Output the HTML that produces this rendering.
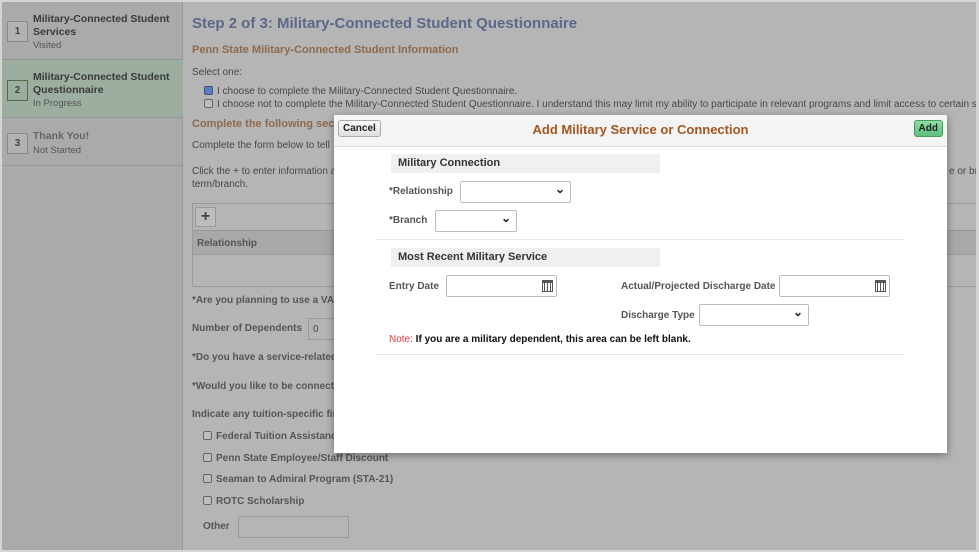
<!DOCTYPE html>
<html><head><style>
*{box-sizing:border-box;margin:0;padding:0}
body{width:979px;height:552px;overflow:hidden;font-family:"Liberation Sans",sans-serif;background:#b5b5b5;position:relative;font-size:10px;color:#474747}
.frame{position:absolute;left:0;top:0;width:979px;height:552px;border:2px solid #d4d4d4;border-right-width:3px}
.side{position:absolute;left:2px;top:2px;width:181px;height:548px;background:#aaaaaa;border-right:1px solid #999}
.item{position:absolute;left:0;width:181px;border-bottom:1px solid #959595}
.num{position:absolute;left:5px;width:21px;height:21px;border:1px solid #888;font-weight:bold;font-size:10px;text-align:center;line-height:19px;color:#444;background:#b2b2b2}
.t{position:absolute;left:31px;font-weight:bold;font-size:10.5px;line-height:13px;color:#3a3a3a}
.s{position:absolute;left:31px;font-size:9.5px;color:#555}
.main{position:absolute;left:192px;top:0}
.a{position:absolute;white-space:nowrap}
.h1{font-size:15px;font-weight:bold;color:#5d678a}
.h2{font-size:11px;font-weight:bold;color:#8d6a4d}
.b{font-weight:bold;color:#555}
.cb{display:inline-block;width:9px;height:9px;border:1px solid #666;border-radius:2px;vertical-align:-1px;margin-right:4px;background:#bdbdbd}
.modal{position:absolute;left:334px;top:115px;width:613px;height:338px;background:#fff;box-shadow:0 2px 8px rgba(0,0,0,.4)}
.mh{height:32px;background:#f4f4f4;border-bottom:1px solid #ddd;position:relative}
.btn{position:absolute;top:4px;height:18px;border:1px solid #aaa;border-radius:3px;font-weight:bold;font-size:10px;line-height:16px;padding:0 4px;background:linear-gradient(#fafafa,#ddd);color:#222}
.sec{position:absolute;left:57px;width:269px;height:19px;background:#f0f0f0;font-weight:bold;font-size:11px;color:#333;padding:3px 7px}
.lb{position:absolute;font-weight:bold;font-size:10px;color:#555}
.inp{position:absolute;height:22px;border:1px solid #bbb;border-radius:2px;background:#fff}
.sel::after{content:"⌄";position:absolute;right:5px;top:0;font-size:12px;font-weight:bold;color:#222}
.hr{position:absolute;left:42px;width:528px;border-top:1px solid #e6e6e6}
.cal{position:absolute;right:3px;top:4px;width:11px;height:12px;border:1px solid #555;border-top-width:3px;background:repeating-linear-gradient(90deg,#fff 0 1px,#555 1px 2px,#fff 2px 3px)}
</style></head><body>
<div class="side">
 <div class="item" style="top:0;height:58px"><div class="num" style="top:19px">1</div><div class="t" style="top:11px">Military-Connected Student<br>Services</div><div class="s" style="top:38px">Visited</div></div>
 <div class="item" style="top:58px;height:58px;background:#9bae9f"><div class="num" style="top:20px;border-color:#566b4a;background:#9bae9f">2</div><div class="t" style="top:11px">Military-Connected Student<br>Questionnaire</div><div class="s" style="top:38px">In Progress</div></div>
 <div class="item" style="top:116px;height:48px"><div class="num" style="top:15px">3</div><div class="t" style="top:12px;color:#666">Thank You!</div><div class="s" style="top:27px">Not Started</div></div>
</div>
<div class="main">
 <div class="a h1" style="left:0;top:15px">Step 2 of 3: Military-Connected Student Questionnaire</div>
 <div class="a h2" style="left:0;top:44px">Penn State Military-Connected Student Information</div>
 <div class="a" style="left:0;top:67px">Select one:</div>
 <div class="a" style="left:12px;top:86px"><span class="cb" style="background:#5a7bc6;border-color:#456"></span>I choose to complete the Military-Connected Student Questionnaire.</div>
 <div class="a" style="left:12px;top:99px"><span class="cb"></span>I choose not to complete the Military-Connected Student Questionnaire. I understand this may limit my ability to participate in relevant programs and limit access to certain scho</div>
 <div class="a h2" style="left:0;top:118px">Complete the following sect</div>
 <div class="a" style="left:0;top:140px">Complete the form below to tell</div>
 <div class="a" style="left:0;top:166px">Click the + to enter information a</div>
 <div class="a" style="left:0;top:179px">term/branch.</div>
 <div class="a" style="left:757px;top:166px">e or bra</div>
 <div class="a" style="left:0;top:203px;width:800px;height:84px;border:1px solid #999"></div>
 <div class="a" style="left:3px;top:207px;width:21px;height:20px;border:1px solid #999;background:#bdbdbd;font-weight:bold;font-size:16px;text-align:center;line-height:18px;color:#444">+</div>
 <div class="a b" style="left:1px;top:230px;width:798px;height:25px;background:#a8a8a8;border-top:1px solid #999;border-bottom:1px solid #999;padding:7px 4px">Relationship</div>
 <div class="a b" style="left:0;top:295px">*Are you planning to use a VA</div>
 <div class="a b" style="left:0;top:323px">Number of Dependents</div>
 <div class="a" style="left:116px;top:318px;width:30px;height:22px;border:1px solid #999;padding:5px 4px">0</div>
 <div class="a b" style="left:0;top:352px">*Do you have a service-related</div>
 <div class="a b" style="left:0;top:381px">*Would you like to be connecte</div>
 <div class="a b" style="left:0;top:409px">Indicate any tuition-specific fin</div>
 <div class="a b" style="left:11px;top:431px"><span class="cb"></span>Federal Tuition Assistance</div>
 <div class="a b" style="left:11px;top:453px"><span class="cb"></span>Penn State Employee/Staff Discount</div>
 <div class="a b" style="left:11px;top:474px"><span class="cb"></span>Seaman to Admiral Program (STA-21)</div>
 <div class="a b" style="left:11px;top:496px"><span class="cb"></span>ROTC Scholarship</div>
 <div class="a b" style="left:11px;top:521px">Other</div>
 <div class="a" style="left:46px;top:516px;width:111px;height:22px;border:1px solid #999"></div>
</div>
<div class="modal">
 <div class="mh">
  <div class="btn" style="left:4px;top:5px;height:17px;line-height:15px">Cancel</div>
  <div class="a" style="left:0;width:100%;text-align:center;top:7px;font-size:13px;font-weight:bold;color:#a4561f">Add Military Service or Connection</div>
  <div class="btn" style="right:4px;top:5px;height:17px;line-height:15px;background:linear-gradient(#8fdca6,#5fbf7f);border-color:#4a9a63">Add</div>
 </div>
 <div class="sec" style="top:39px">Military Connection</div>
 <div class="lb" style="left:55px;top:71px">*Relationship</div>
 <div class="inp sel" style="left:126px;top:66px;width:111px"></div>
 <div class="lb" style="left:55px;top:100px">*Branch</div>
 <div class="inp sel" style="left:101px;top:95px;width:82px"></div>
 <div class="hr" style="top:124px"></div>
 <div class="sec" style="top:133px">Most Recent Military Service</div>
 <div class="lb" style="left:55px;top:166px">Entry Date</div>
 <div class="inp" style="left:112px;top:160px;width:111px"><div class="cal"></div></div>
 <div class="lb" style="left:287px;top:166px">Actual/Projected Discharge Date</div>
 <div class="inp" style="left:445px;top:160px;width:111px"><div class="cal"></div></div>
 <div class="lb" style="left:287px;top:195px">Discharge Type</div>
 <div class="inp sel" style="left:365px;top:189px;width:110px"></div>
 <div class="a" style="left:55px;top:219px;font-weight:bold;color:#111"><span style="color:#e03a3a;font-weight:normal">Note:</span> If you are a military dependent, this area can be left blank.</div>
 <div class="hr" style="top:239px"></div>
</div>
<div class="frame"></div>
</body></html>
